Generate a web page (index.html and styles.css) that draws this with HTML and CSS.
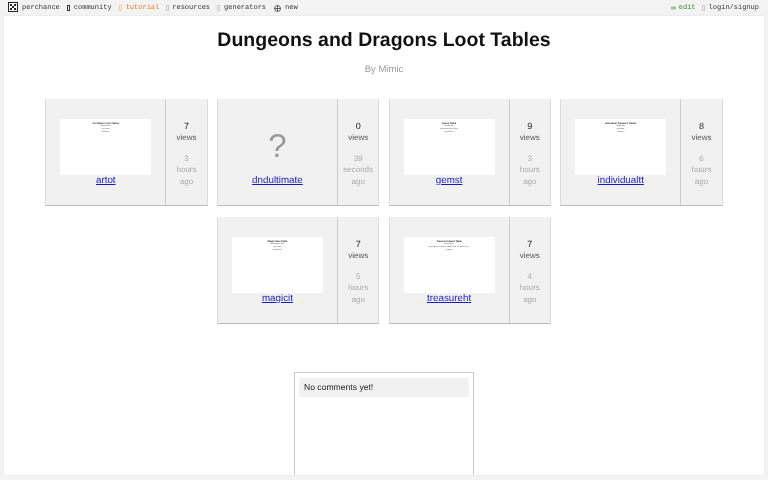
FILE: index.html
```html
<!DOCTYPE html>
<html lang="en">
<head>
<meta charset="utf-8">
<title>Dungeons and Dragons Loot Tables</title>
<link rel="stylesheet" href="styles.css">
</head>
<body>
<nav class="nav">
  <a class="nav-item brand"><svg class="dice" viewBox="0 0 10 10" width="10" height="10"><rect x="0.5" y="0.5" width="9" height="9" fill="#fff" stroke="#222"/><rect x="2" y="2" width="2" height="2" fill="#222"/><rect x="6" y="2" width="2" height="2" fill="#222"/><rect x="4" y="4" width="2" height="2" fill="#222"/><rect x="2" y="6" width="2" height="2" fill="#222"/><rect x="6" y="6" width="2" height="2" fill="#222"/></svg><span>perchance</span></a>
  <a class="nav-item community"><i class="tofu dark"></i><span>community</span></a>
  <a class="nav-item tutorial"><i class="tofu orange"></i><span>tutorial</span></a>
  <a class="nav-item resources"><i class="tofu"></i><span>resources</span></a>
  <a class="nav-item generators"><i class="tofu"></i><span>generators</span></a>
  <a class="nav-item new"><svg class="globe" viewBox="0 0 7 7" width="7" height="7"><circle cx="3.5" cy="3.5" r="3" fill="none" stroke="#444" stroke-width="0.8"/><path d="M0.5 3.5H6.5M3.5 0.5V6.5" stroke="#444" stroke-width="0.8"/></svg><span>new</span></a>
  <span class="nav-space"></span>
  <a class="nav-item edit"><svg class="pencil" viewBox="0 0 6 4" width="6" height="4"><path d="M0 1.2H5M0 2.8H5" stroke="#5aa85a" stroke-width="0.9"/></svg><span>edit</span></a>
  <a class="nav-item login"><i class="tofu"></i><span>login/signup</span></a>
</nav>
<main class="page">
  <h1 class="title">Dungeons and Dragons Loot Tables</h1>
  <p class="byline">By Mimic</p>
  <section class="cards">
    <article class="card">
      <div class="preview">
        <div class="thumb"><div class="thumb-bar"><span>perchance</span><span>edit</span></div><div class="thumb-page"><b>Art Object Loot Tables</b><span>randomize</span><span>generate</span><span>artobject</span></div></div>
        <a class="name" href="#">artot</a>
      </div>
      <div class="stats"><span class="num">7</span><span class="label">views</span><span class="age">3<br>hours<br>ago</span></div>
    </article>
    <article class="card">
      <div class="preview">
        <div class="thumb none">?</div>
        <a class="name" href="#">dndultimate</a>
      </div>
      <div class="stats"><span class="num">0</span><span class="label">views</span><span class="age">39<br>seconds<br>ago</span></div>
    </article>
    <article class="card">
      <div class="preview">
        <div class="thumb"><div class="thumb-bar"><span>perchance</span><span>edit</span></div><div class="thumb-page"><b>Gems Table</b><span>randomize</span><span>generate gems here</span><span>gemstone</span></div></div>
        <a class="name" href="#">gemst</a>
      </div>
      <div class="stats"><span class="num">9</span><span class="label">views</span><span class="age">3<br>hours<br>ago</span></div>
    </article>
    <article class="card">
      <div class="preview">
        <div class="thumb"><div class="thumb-bar"><span>perchance</span><span>edit</span></div><div class="thumb-page"><b>Individual Treasure Tables</b><span>randomize</span><span>generate</span><span>treasure</span></div></div>
        <a class="name" href="#">individualtt</a>
      </div>
      <div class="stats"><span class="num">8</span><span class="label">views</span><span class="age">6<br>hours<br>ago</span></div>
    </article>
    <article class="card">
      <div class="preview">
        <div class="thumb"><div class="thumb-bar"><span>perchance</span><span>edit</span></div><div class="thumb-page"><b>Magic Item Table</b><span>randomize item</span><span>generate</span><span>magicitem</span></div></div>
        <a class="name" href="#">magicit</a>
      </div>
      <div class="stats"><span class="num">7</span><span class="label">views</span><span class="age">5<br>hours<br>ago</span></div>
    </article>
    <article class="card">
      <div class="preview">
        <div class="thumb"><div class="thumb-bar"><span>perchance</span><span>edit</span></div><div class="thumb-page"><b>Treasure Hoard Table</b><span>randomize</span><span>generate a treasure hoard with the items here</span><span>treasure</span></div></div>
        <a class="name" href="#">treasureht</a>
      </div>
      <div class="stats"><span class="num">7</span><span class="label">views</span><span class="age">4<br>hours<br>ago</span></div>
    </article>
  </section>
  <section class="comments"><div class="no-comments"><span class="no-comments-text">No comments yet!</span></div></section>
</main>
</body>
</html>
```
FILE: styles.css
```css
* { box-sizing: border-box; }
html, body { margin: 0; height: 100%; overflow: hidden; }
body { background: #f3f3f3; font-family: "Liberation Sans", Arial, sans-serif; color: #111; text-rendering: geometricPrecision; }
a { color: inherit; }

.nav { display: flex; align-items: center; height: 16px; padding: 0 9px 0 8px; font: 7px "Liberation Mono", monospace; color: #333; will-change: opacity; }
.nav-item { display: flex; align-items: center; gap: 4px; margin-right: 7px; }
.nav-space { flex: 1; }
.dice { display: block; margin-bottom: 2px; }
.tofu { display: block; width: 3px; height: 6px; border: 1px solid #ccc; margin-bottom: 1px; }
.tofu.dark { border-color: #333; }
.tofu.orange { border-color: #f3c9a5; }
.tutorial { color: #e07b2c; }
.resources { margin-right: 7px; gap: 3px; }
.generators { margin-right: 8px; }
.edit { color: #2f8a2f; gap: 2px; margin-right: 6px; }
.pencil { display: block; }
.login { margin-right: 0; }
.globe { display: block; }

.page { margin: 0 4px; height: 459px; background: #fff; overflow: hidden; box-shadow: 0 0 1px #ccc; text-align: center; }
.title { margin: 14px 0 0; font-size: 19.5px; line-height: 20px; font-weight: 700; color: #111; will-change: opacity; }
.byline { margin: 15px 0 0; font-size: 9.5px; line-height: 10px; color: #999; will-change: opacity; }

.cards { display: flex; flex-wrap: wrap; justify-content: center; gap: 11px 9.17px; margin-top: 24px; padding: 0 40px; will-change: opacity; }
.card { display: flex; width: 162.5px; height: 107px; background: #f1f1f1; border-right: 1px solid #ddd; border-bottom: 1px solid #bbb; border-left: 1px solid #ddd; }
.preview { width: 120px; display: flex; flex-direction: column; align-items: center; padding-top: 18px; border-right: 1px solid #ccc; }
.thumb { width: 91px; height: 58px; background: #fff; overflow: hidden; font-size: 2px; line-height: 3px; color: #555; }
.thumb.none { background: none; font-size: 33px; line-height: 58px; color: #999; }
.thumb-bar { display: flex; justify-content: space-between; height: 2px; line-height: 2px; background: #f1f1f1; color: #888; padding: 0 1px; font-size: 1.5px; }
.thumb-page { display: flex; flex-direction: column; align-items: center; padding-top: 3px; }
.thumb-page b { font-size: 2.5px; color: #222; }
.name { font-size: 9.8px; line-height: 12px; color: #1a1ab8; }
.stats { flex: 1; display: flex; flex-direction: column; align-items: center; padding-top: 22px; font-size: 8px; line-height: 11px; }
.num { font-size: 9px; color: #222; }
.label { color: #555; }
.age { margin-top: 10px; line-height: 11.3px; color: #aaa; }

.comments { width: 180px; height: 110px; margin: 48px auto 0; padding: 5px 4px; background: #fff; border: 1px solid #ccc; }
.no-comments { background: #f1f1f1; height: 19px; padding-left: 5px; font-size: 8.6px; line-height: 18px; text-align: left; color: #222; }
.no-comments-text { display: block; will-change: opacity; }
```
